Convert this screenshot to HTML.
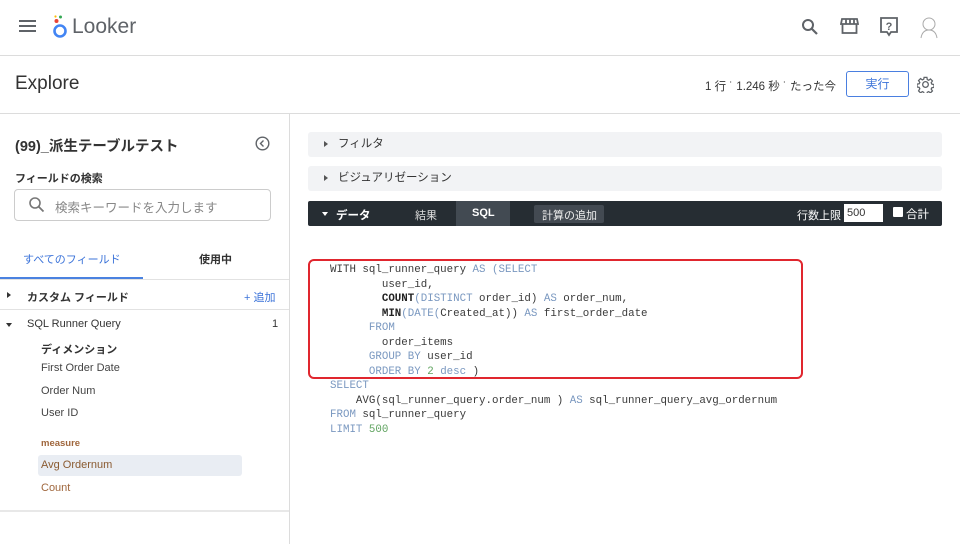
<!DOCTYPE html>
<html><head><meta charset="utf-8"><style>
*{box-sizing:border-box;margin:0;padding:0}
body{width:960px;height:544px;overflow:hidden;background:#fff;font-family:"Liberation Sans","Noto Sans CJK JP",sans-serif;color:#333;position:relative}
.a{position:absolute;white-space:nowrap}
.code{font-family:"Liberation Mono","Noto Sans CJK JP",monospace;font-size:10.8px;line-height:14.5px;color:#3a3a3a;white-space:pre}
.k{color:#7a98c0}.n{color:#5fa35f}.b{color:#222;font-weight:bold}
.bar{position:absolute;left:308px;width:634px;height:25px;background:#f2f3f5;border-radius:3px;font-size:11.5px;line-height:25px;padding-left:16px;color:#333}
.tri{display:inline-block;width:0;height:0;border-left:4px solid #555;border-top:3.5px solid transparent;border-bottom:3.5px solid transparent;margin-right:10px;vertical-align:0}
</style></head><body>
<div class="a" style="left:19px;top:20px;width:17px;height:2px;background:#5f6368;box-shadow:0 5px 0 #5f6368,0 10px 0 #5f6368"></div>
<svg class="a" style="left:52px;top:14px" width="18" height="26" viewBox="0 0 18 26"><circle cx="8" cy="17" r="5.5" fill="none" stroke="#4285f4" stroke-width="2.6"/><circle cx="4.5" cy="7" r="2" fill="#ea4335"/><circle cx="8.5" cy="3" r="1.5" fill="#34a853"/><circle cx="3.5" cy="2.5" r="1.1" fill="#fbbc04"/></svg>
<div class="a" style="left:72px;top:15px;font-size:21px;color:#5f6368">Looker</div>
<svg class="a" style="left:801px;top:18px" width="18" height="18" viewBox="0 0 18 18"><circle cx="7" cy="7" r="5" fill="none" stroke="#5f6368" stroke-width="2"/><path d="M11 11l5 5" stroke="#5f6368" stroke-width="2.2"/></svg>
<svg class="a" style="left:840px;top:18px" width="19" height="17" viewBox="0 0 19 17"><path d="M2 1h15l1 5H1z" fill="none" stroke="#5f6368" stroke-width="1.8"/><path d="M6 1v5M10 1v5M14 1v5M2.5 6v9h14V6" fill="none" stroke="#5f6368" stroke-width="1.8"/></svg>
<svg class="a" style="left:880px;top:17px" width="18" height="20" viewBox="0 0 18 20"><path d="M1 1h16v14h-6l-2 3-2-3H1z" fill="none" stroke="#5f6368" stroke-width="1.8"/><text x="9" y="13" font-size="11" font-weight="bold" text-anchor="middle" fill="#5f6368" font-family="Liberation Sans">?</text></svg>
<svg class="a" style="left:918px;top:15px" width="22" height="24" viewBox="0 0 22 24"><circle cx="11" cy="9" r="6" fill="none" stroke="#aaa"/><path d="M3 23c1-6 4-8 8-8s7 2 8 8" fill="none" stroke="#aaa"/></svg>
<div class="a" style="left:0;top:55px;width:960px;height:1px;background:#dcdcdc"></div>
<div class="a" style="left:15px;top:73px;font-size:19px;color:#333">Explore</div>
<div class="a" style="right:124px;top:78px;font-size:11.5px;color:#333">1 行 ˙ 1.246 秒 ˙ たった今</div>
<div class="a" style="left:846px;top:71px;width:63px;height:26px;border:1px solid #4a7fe0;border-radius:3px;font-size:12px;color:#3b73d9;text-align:center;line-height:24px">実行</div>
<svg class="a" style="left:917px;top:76px" width="17" height="17" viewBox="0 0 24 24"><path d="M12 8a4 4 0 1 0 0 8a4 4 0 1 0 0-8zM10 2h4l.5 3 2 1 2.5-1.8 2.8 2.8L20 9.5l1 2 3 .5v4l-3 .5-1 2 1.8 2.5-2.8 2.8-2.5-1.8-2 1-.5 3h-4l-.5-3-2-1-2.5 1.8-2.8-2.8L4 18l-1-2-3-.5v-4l3-.5 1-2-1.8-2.5L5 3.7 7.5 5.5l2-1z" fill="none" stroke="#5f6368" stroke-width="1.8"/></svg>
<div class="a" style="left:0;top:113px;width:960px;height:1px;background:#dcdcdc"></div>
<div class="a" style="left:289px;top:114px;width:1px;height:430px;background:#dcdcdc"></div>
<div class="a" style="left:15px;top:135px;font-size:14.5px;font-weight:bold;color:#333">(99)_派生テーブルテスト</div>
<svg class="a" style="left:255px;top:136px" width="15" height="15" viewBox="0 0 15 15"><circle cx="7.5" cy="7.5" r="6.3" fill="none" stroke="#5f6368" stroke-width="1.4"/><path d="M8.5 4.5l-3 3 3 3" fill="none" stroke="#5f6368" stroke-width="1.4"/></svg>
<div class="a" style="left:15px;top:170px;font-size:11px;font-weight:bold;color:#333">フィールドの検索</div>
<div class="a" style="left:14px;top:189px;width:257px;height:32px;border:1px solid #ccc;border-radius:4px"></div>
<svg class="a" style="left:28px;top:196px" width="17" height="17" viewBox="0 0 17 17"><circle cx="7" cy="7" r="5" fill="none" stroke="#777" stroke-width="1.6"/><path d="M10.5 10.5l5 5" stroke="#777" stroke-width="1.8"/></svg>
<div class="a" style="left:55px;top:197px;font-size:12.5px;color:#888">検索キーワードを入力します</div>
<div class="a" style="left:23px;top:251px;font-size:11px;color:#3b73d9">すべてのフィールド</div>
<div class="a" style="left:199px;top:251px;font-size:11px;color:#333;font-weight:bold">使用中</div>
<div class="a" style="left:0;top:279px;width:289px;height:1px;background:#e2e2e2"></div>
<div class="a" style="left:0;top:277px;width:143px;height:2px;background:#4a82e0"></div>
<div class="a" style="left:7px;top:292px;width:0;height:0;border-left:4px solid #333;border-top:3.5px solid transparent;border-bottom:3.5px solid transparent"></div>
<div class="a" style="left:27px;top:289px;font-size:11px;font-weight:bold;color:#333">カスタム フィールド</div>
<div class="a" style="left:244px;top:289px;font-size:11px;color:#3b73d9">+ 追加</div>
<div class="a" style="left:0;top:309px;width:289px;height:1px;background:#e2e2e2"></div>
<div class="a" style="left:6px;top:323px;width:0;height:0;border-top:4px solid #333;border-left:3.5px solid transparent;border-right:3.5px solid transparent"></div>
<div class="a" style="left:27px;top:318px;font-size:11px;color:#333">SQL Runner Query</div>
<div class="a" style="left:272px;top:318px;font-size:11px;color:#333">1</div>
<div class="a" style="left:41px;top:341px;font-size:11px;font-weight:bold;color:#333">ディメンション</div>
<div class="a" style="left:41px;top:362px;font-size:11px;color:#444">First Order Date</div>
<div class="a" style="left:41px;top:385px;font-size:11px;color:#444">Order Num</div>
<div class="a" style="left:41px;top:407px;font-size:11px;color:#444">User ID</div>
<div class="a" style="left:41px;top:438px;font-size:9.5px;font-weight:bold;color:#a0673d">measure</div>
<div class="a" style="left:38px;top:455px;width:204px;height:21px;background:#e9edf3;border-radius:3px"></div>
<div class="a" style="left:41px;top:459px;font-size:11px;color:#8a5a30">Avg Ordernum</div>
<div class="a" style="left:41px;top:482px;font-size:11px;color:#a0673d">Count</div>
<div class="a" style="left:0;top:510px;width:289px;height:2px;background:#e8e8e8"></div>
<div class="bar" style="top:132px"><span class="tri"></span>フィルタ</div>
<div class="bar" style="top:166px"><span class="tri"></span>ビジュアリゼーション</div>
<div class="a" style="left:308px;top:201px;width:634px;height:25px;background:#262d33;border-radius:2px"></div>
<div class="a" style="left:322px;top:212px;width:0;height:0;border-top:4px solid #fff;border-left:3.5px solid transparent;border-right:3.5px solid transparent"></div>
<div class="a" style="left:336px;top:207px;font-size:11.5px;color:#fff;font-weight:bold">データ</div>
<div class="a" style="left:415px;top:207px;font-size:11px;color:#ddd">結果</div>
<div class="a" style="left:456px;top:201px;width:54px;height:25px;background:#424a52"></div>
<div class="a" style="left:472px;top:207px;font-size:11px;color:#fff;font-weight:bold">SQL</div>
<div class="a" style="left:534px;top:205px;width:70px;height:18px;background:#434a52;border-radius:2px"></div>
<div class="a" style="left:542px;top:207px;font-size:11px;color:#eee">計算の追加</div>
<div class="a" style="left:797px;top:207px;font-size:11px;color:#fff">行数上限</div>
<div class="a" style="left:844px;top:204px;width:39px;height:18px;background:#fff;font-size:11px;color:#333;padding:3px 0 0 3px">500</div>
<div class="a" style="left:893px;top:207px;width:10px;height:10px;background:#fff;border-radius:1px"></div>
<div class="a" style="left:906px;top:206px;font-size:11.5px;color:#fff">合計</div>
<div class="a" style="left:308px;top:259px;width:495px;height:120px;border:2px solid #e0262e;border-radius:6px"></div>
<div class="a code" style="left:330px;top:263px">WITH sql_runner_query <span class="k">AS</span> <span class="k">(SELECT</span>
        user_id,
        <span class="b">COUNT</span><span class="k">(DISTINCT</span> order_id) <span class="k">AS</span> order_num,
        <span class="b">MIN</span><span class="k">(DATE(</span>Created_at)) <span class="k">AS</span> first_order_date
      <span class="k">FROM</span>
        order_items
      <span class="k">GROUP BY</span> user_id
      <span class="k">ORDER BY</span> <span class="n">2</span> <span class="k">desc</span> )
<span class="k">SELECT</span>
    AVG(sql_runner_query.order_num ) <span class="k">AS</span> sql_runner_query_avg_ordernum
<span class="k">FROM</span> sql_runner_query
<span class="k">LIMIT</span> <span class="n">500</span></div>
</body></html>
